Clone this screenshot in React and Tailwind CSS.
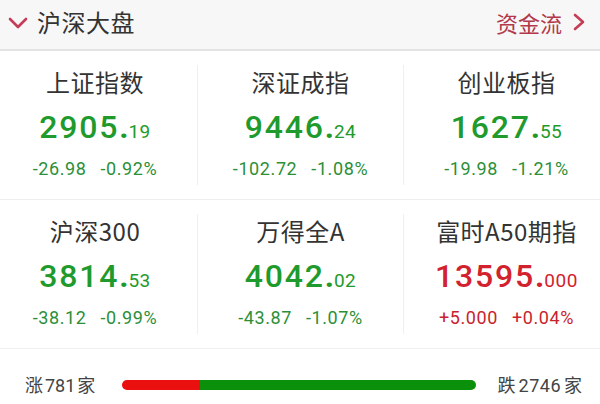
import React from "react";

const CJK = "font-['Noto_Sans_CJK_SC','Noto_Sans',sans-serif]";
const NUM = "font-['Roboto','Noto_Sans',sans-serif]";

const indices = [
  [
    { name: "上证指数", int: "2905", dec: "19", chg: "-26.98", pct: "-0.92%", up: false },
    { name: "深证成指", int: "9446", dec: "24", chg: "-102.72", pct: "-1.08%", up: false },
    { name: "创业板指", int: "1627", dec: "55", chg: "-19.98", pct: "-1.21%", up: false },
  ],
  [
    { name: "沪深300", int: "3814", dec: "53", chg: "-38.12", pct: "-0.99%", up: false },
    { name: "万得全A", int: "4042", dec: "02", chg: "-43.87", pct: "-1.07%", up: false },
    { name: "富时A50期指", int: "13595", dec: "000", chg: "+5.000", pct: "+0.04%", up: true },
  ],
];

function Cell({ item, shift }) {
  const numColor = item.up ? "text-[#d2222d]" : "text-[#1f9a2c]";
  const chgColor = item.up ? "text-[#c8232c]" : "text-[#2c8f38]";
  return (
    <div className={`flex flex-col items-center pt-[19px] ${shift}`}>
      <div className={`${CJK} h-6 leading-6 text-[24px] text-[#333] tracking-[0.5px] whitespace-nowrap`}>
        {item.name}
      </div>
      <div className={`${NUM} ${numColor} mt-[15px] h-9 leading-9 flex items-baseline whitespace-nowrap`}>
        <span className="text-[32px] font-medium tracking-[1.8px]">{item.int}</span>
        <span className="text-[32px] font-bold">.</span>
        <span className="text-[19px] tracking-[0.5px]">{item.dec}</span>
      </div>
      <div className={`${NUM} ${chgColor} mt-[14px] h-5 leading-5 text-[18px] flex gap-[14px] whitespace-nowrap tracking-[0.6px]`}>
        <span>{item.chg}</span>
        <span>{item.pct}</span>
      </div>
    </div>
  );
}

function Divider() {
  return <div className="w-px h-[120px] bg-[#efefef] self-center" />;
}

function Row({ items }) {
  return (
    <div className="flex h-[149px] border-b border-[#eeeeee]">
      <div className="w-[197px]">
        <Cell item={items[0]} shift="pr-[7px]" />
      </div>
      <Divider />
      <div className="w-[205px]">
        <Cell item={items[1]} shift="" />
      </div>
      <Divider />
      <div className="flex-1">
        <Cell item={items[2]} shift="pl-[9px]" />
      </div>
    </div>
  );
}

export default function App() {
  return (
    <div className="w-[600px] h-[404px] bg-white overflow-hidden">
      {/* header */}
      <div className="h-[51px] bg-[#f7f7f7] border-b-2 border-[#e3e3e3] flex items-center pl-[8px] pr-[14px] pb-[5px]">
        <svg width="20" height="12" viewBox="0 0 20 12" className="mt-[1px]">
          <path d="M2 2 L10 10 L18 2" fill="none" stroke="#c43c55" strokeWidth="2.6" strokeLinecap="round" strokeLinejoin="round" />
        </svg>
        <span className={`${CJK} ml-[9px] text-[24px] leading-none text-[#333] tracking-[0.5px]`}>沪深大盘</span>
        <div className="flex-1" />
        <span className={`${CJK} text-[22px] leading-none text-[#b2384a]`}>资金流</span>
        <svg width="14" height="18" viewBox="0 0 14 18" className="ml-[10px]">
          <path d="M3 2 L11 9 L3 16" fill="none" stroke="#c43c55" strokeWidth="2.6" strokeLinecap="round" strokeLinejoin="round" />
        </svg>
      </div>

      <Row items={indices[0]} />
      <Row items={indices[1]} />

      {/* advance / decline */}
      <div className="h-[55px] flex items-center pl-[25px] pr-[18px] pt-[16px]">
        <span className={`${CJK} text-[18px] leading-none text-[#444] whitespace-nowrap`}>
          涨<span className={`${NUM} mx-[2px]`}>781</span>家
        </span>
        <div className="ml-[27px] w-[354px] h-[10px] rounded-full overflow-hidden flex">
          <div className="w-[78px] bg-[#ea1010]" />
          <div className="flex-1 bg-[#0b900b]" />
        </div>
        <div className="flex-1" />
        <span className={`${CJK} text-[18px] leading-none text-[#444] whitespace-nowrap`}>
          跌<span className={`${NUM} mx-[3px] tracking-[0.5px]`}>2746</span>家
        </span>
      </div>
    </div>
  );
}
